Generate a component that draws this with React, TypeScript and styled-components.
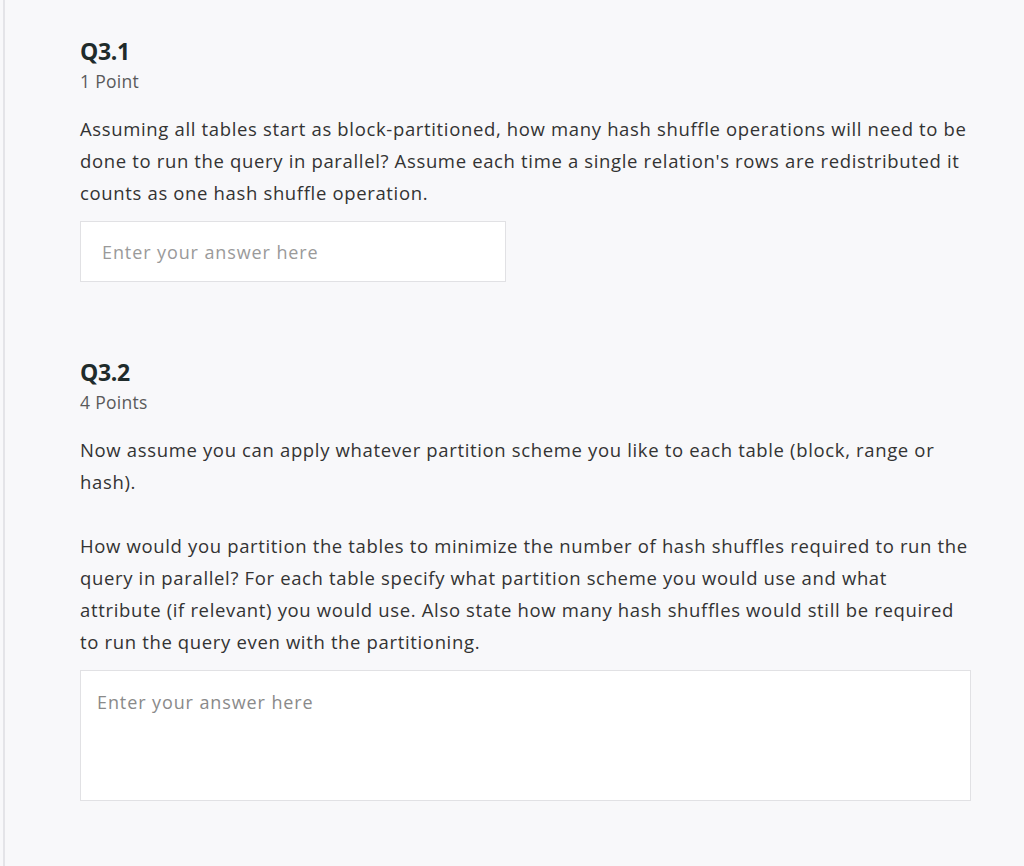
import styled, { createGlobalStyle } from "styled-components";

const GlobalStyle = createGlobalStyle`
  html, body {
    margin: 0;
    padding: 0;
    background: #f8f8fa;
  }
  body {
    font-family: "Open Sans", "Lato", sans-serif;
    color: #333;
  }
`;

const SPage = styled.div`
  min-height: 866px;
  margin-left: 3px;
  border-left: 2px solid #e4e4e8;
  padding: 36px 54px 40px 75px;
  box-sizing: border-box;
  background: #f8f8fa;
`;

const SQuestion = styled.section`
  margin-bottom: 75px;
  &:last-child {
    margin-bottom: 0;
  }
`;

const STitle = styled.h2`
  margin: 0;
  font-size: 23px;
  line-height: 30px;
  font-weight: 700;
  color: #1f2b2b;
  letter-spacing: -0.3px;
`;

const SPoints = styled.div`
  font-size: 17.5px;
  line-height: 30px;
  color: #5a5a5a;
  letter-spacing: 0.3px;
`;

const SText = styled.p`
  margin: 17px 0 0;
  font-size: 18.5px;
  line-height: 32px;
  letter-spacing: 0.65px;
  color: #333;
  & + & {
    margin-top: 32px;
  }
`;

const SInput = styled.input`
  display: block;
  box-sizing: border-box;
  width: 426px;
  height: 61px;
  margin-top: 12px;
  padding: 0 21px;
  border: 1px solid #e1e1e4;
  background: #fff;
  font-family: inherit;
  font-size: 18px;
  letter-spacing: 0.9px;
  color: #333;
  &::placeholder {
    color: #9a9a9a;
  }
`;

const STextarea = styled.textarea`
  display: block;
  box-sizing: border-box;
  width: 891px;
  height: 131px;
  margin-top: 12px;
  padding: 18px 16px;
  border: 1px solid #e1e1e4;
  background: #fff;
  font-family: inherit;
  font-size: 18px;
  letter-spacing: 0.9px;
  line-height: 26px;
  color: #333;
  resize: none;
  &::placeholder {
    color: #8a8a8a;
  }
`;

export default function App() {
  return (
    <>
      <GlobalStyle />
      <SPage>
        <SQuestion>
          <STitle>Q3.1</STitle>
          <SPoints>1 Point</SPoints>
          <SText>
            Assuming all tables start as block-partitioned, how many hash shuffle operations will
            need to be done to run the query in parallel? Assume each time a single relation's rows
            are redistributed it counts as one hash shuffle operation.
          </SText>
          <SInput placeholder="Enter your answer here" />
        </SQuestion>
        <SQuestion>
          <STitle>Q3.2</STitle>
          <SPoints>4 Points</SPoints>
          <SText>
            Now assume you can apply whatever partition scheme you like to each table (block, range
            or hash).
          </SText>
          <SText>
            How would you partition the tables to minimize the number of hash shuffles required to
            run the query in parallel? For each table specify what partition scheme you would use and
            what attribute (if relevant) you would use. Also state how many hash shuffles would still
            be required to run the query even with the partitioning.
          </SText>
          <STextarea placeholder="Enter your answer here" />
        </SQuestion>
      </SPage>
    </>
  );
}
